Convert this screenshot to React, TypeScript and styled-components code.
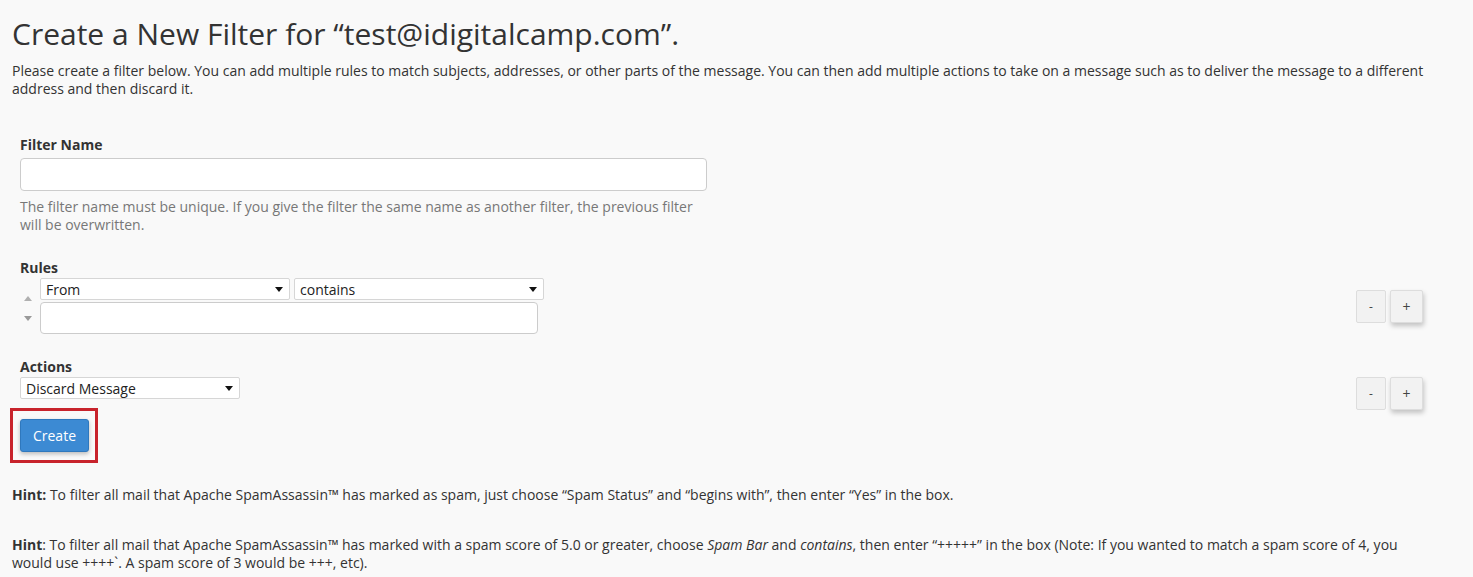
import React from "react";
import styled, { createGlobalStyle } from "styled-components";

const GlobalStyle = createGlobalStyle`
    html, body {
        margin: 0;
        padding: 0;
        background: #f9f9f9;
    }
    body {
        font-family: "Open Sans", "Liberation Sans", sans-serif;
        color: #333;
    }
`;

export default function App() {
    return (
        <>
            <GlobalStyle />
            <Page>
                <Title>Create a New Filter for “test@idigitalcamp.com”.</Title>
                <Intro>
                    Please create a filter below. You can add multiple rules to
                    match subjects, addresses, or other parts of the message.
                    You can then add multiple actions to take on a message such
                    as to deliver the message to a different address and then
                    discard it.
                </Intro>

                <Form>
                    <FieldGroup>
                        <Label>Filter Name</Label>
                        <TextInput type="text" $width={687} $height={33} />
                        <HelpText>
                            The filter name must be unique. If you give the
                            filter the same name as another filter, the previous
                            filter will be overwritten.
                        </HelpText>
                    </FieldGroup>

                    <Section $gap={25}>
                        <Label>Rules</Label>
                        <RuleRow>
                            <RuleLeft>
                                <Mover>
                                    <Arrow $dir="up" />
                                    <Arrow $dir="down" />
                                </Mover>
                                <RuleFields>
                                    <SelectRow>
                                        <Select $width={250}>From</Select>
                                        <Select $width={250}>contains</Select>
                                    </SelectRow>
                                    <TextInput type="text" $width={498} $height={32} />
                                </RuleFields>
                            </RuleLeft>
                            <ButtonPair>
                                <SmallButton>-</SmallButton>
                                <SmallButton $raised>+</SmallButton>
                            </ButtonPair>
                        </RuleRow>
                    </Section>

                    <Section $gap={24}>
                        <Label>Actions</Label>
                        <ActionRow>
                            <Select $width={220}>Discard Message</Select>
                            <ButtonPair>
                                <SmallButton>-</SmallButton>
                                <SmallButton $raised>+</SmallButton>
                            </ButtonPair>
                        </ActionRow>
                    </Section>

                    <Highlight>
                        <PrimaryButton>Create</PrimaryButton>
                    </Highlight>
                </Form>

                <Hint>
                    <strong>Hint:</strong> To filter all mail that Apache
                    SpamAssassin™ has marked as spam, just choose “Spam Status”
                    and “begins with”, then enter “Yes” in the box.
                </Hint>
                <Hint>
                    <strong>Hint</strong>: To filter all mail that Apache
                    SpamAssassin™ has marked with a spam score of 5.0 or
                    greater, choose <em>Spam Bar</em> and <em>contains</em>,
                    then enter “+++++” in the box (Note: If you wanted to match
                    a spam score of 4, you would use ++++`. A spam score of 3
                    would be +++, etc).
                </Hint>
            </Page>
        </>
    );
}

const Page = styled.div`
    padding: 14px 40px 0 12px;
    font-size: 14px;
    line-height: 18px;
`;

const Title = styled.h1`
    margin: 0 0 8px;
    font-size: 30px;
    font-weight: 400;
    line-height: 40px;
    color: #333;
`;

const Intro = styled.p`
    margin: 0;
`;

const Form = styled.div`
    padding: 38px 0 0 8px;
`;

const FieldGroup = styled.div`
    display: flex;
    flex-direction: column;
    width: 690px;
`;

const Label = styled.div`
    font-weight: 700;
    margin-bottom: 4px;
`;

const TextInput = styled.input<{ $width: number; $height: number }>`
    box-sizing: border-box;
    width: ${({ $width }) => $width}px;
    height: ${({ $height }) => $height}px;
    margin: 0;
    padding: 6px 10px;
    border: 1px solid #ccc;
    border-radius: 4px;
    background: #fff;
    font: inherit;
`;

const HelpText = styled.div`
    margin-top: 7px;
    color: #777;
`;

const Section = styled.div<{ $gap: number }>`
    margin-top: ${({ $gap }) => $gap}px;
`;

const RuleRow = styled.div`
    display: flex;
    align-items: center;
    justify-content: space-between;
    width: 1403px;
    margin-top: -3px;
`;

const RuleLeft = styled.div`
    display: flex;
    align-items: flex-start;
`;

const Mover = styled.div`
    display: flex;
    flex-direction: column;
    align-items: center;
    gap: 15px;
    width: 16px;
    padding-top: 18px;
`;

const Arrow = styled.span<{ $dir: "up" | "down" }>`
    width: 0;
    height: 0;
    border-left: 4.5px solid transparent;
    border-right: 4.5px solid transparent;
    ${({ $dir }) =>
        $dir === "up"
            ? "border-bottom: 5px solid #b0b0b0;"
            : "border-top: 5px solid #999;"}
`;

const RuleFields = styled.div`
    display: flex;
    flex-direction: column;
    gap: 2px;
    margin-left: 4px;
`;

const SelectRow = styled.div`
    display: flex;
    gap: 4px;
`;

const Select = styled.div<{ $width: number }>`
    box-sizing: border-box;
    position: relative;
    width: ${({ $width }) => $width}px;
    height: 22px;
    padding: 1px 0 0 5px;
    border: 1px solid #d6d6d6;
    border-radius: 2px;
    background: #fff;
    font-size: 14px;
    line-height: 19px;
    color: #222;

    &::after {
        content: "";
        position: absolute;
        right: 6px;
        top: 8px;
        border-left: 4px solid transparent;
        border-right: 4px solid transparent;
        border-top: 5px solid #111;
    }
`;

const ActionRow = styled.div`
    display: flex;
    align-items: flex-start;
    justify-content: space-between;
    width: 1403px;
    margin-top: -3px;
`;

const ButtonPair = styled.div`
    display: flex;
    gap: 4px;
`;

const SmallButton = styled.button<{ $raised?: boolean }>`
    box-sizing: border-box;
    width: ${({ $raised }) => ($raised ? 33 : 30)}px;
    height: 33px;
    padding: 0;
    border: 1px solid #ddd;
    border-radius: 2px;
    background: #f2f2f2;
    color: #444;
    font-family: inherit;
    font-size: ${({ $raised }) => ($raised ? 14 : 12)}px;
    box-shadow: ${({ $raised }) =>
        $raised ? "1px 3px 5px rgba(0, 0, 0, 0.22)" : "none"};
`;

const Highlight = styled.div`
    display: inline-block;
    margin: -2px 0 0 -10px;
    padding: 8px 6px 8px 7px;
    border: 3px solid #c8232c;
`;

const PrimaryButton = styled.button`
    display: block;
    width: 69px;
    height: 33px;
    padding: 0;
    border: 1px solid #2f78bd;
    border-radius: 3px;
    background: #3c8ad3;
    color: #fff;
    font-family: inherit;
    font-size: 14px;
    box-shadow: 0 2px 4px rgba(0, 0, 0, 0.25);
`;

const Hint = styled.p`
    margin: 23px 0 0;

    & + & {
        margin-top: 32px;
    }
`;
